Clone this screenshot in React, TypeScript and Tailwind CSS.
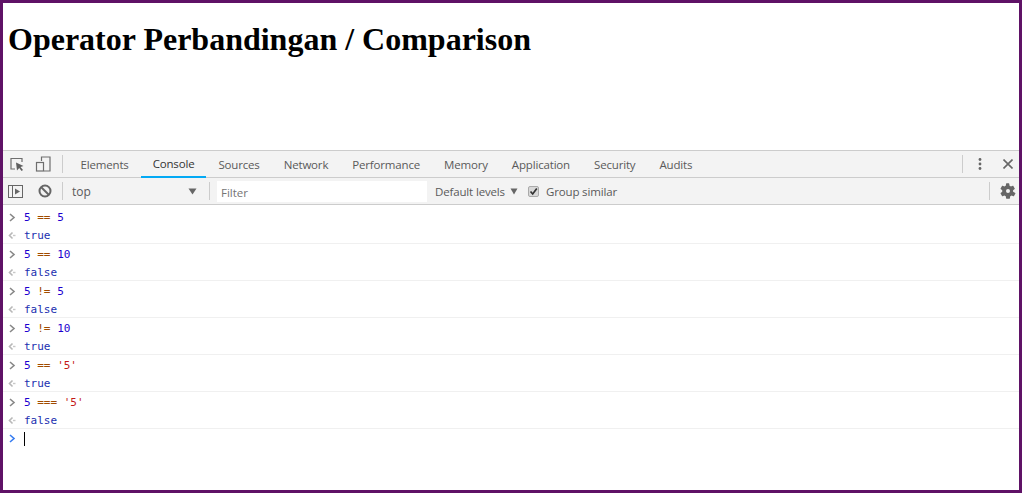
const ui = { fontFamily: '"Open Sans", "Noto Sans", sans-serif' };

const tabs = ["Elements", "Console", "Sources", "Network", "Performance", "Memory", "Application", "Security", "Audits"];

type Tok = [string, string];
const B = "text-[#1c00cf]";
const O = "text-[#a04b00]";
const R = "text-[#c41a16]";
const V = "text-[#1a2fb0]";

const rows: { input: Tok[]; output: string }[] = [
  { input: [["5", B], [" ", ""], ["==", O], [" ", ""], ["5", B]], output: "true" },
  { input: [["5", B], [" ", ""], ["==", O], [" ", ""], ["10", B]], output: "false" },
  { input: [["5", B], [" ", ""], ["!=", O], [" ", ""], ["5", B]], output: "false" },
  { input: [["5", B], [" ", ""], ["!=", O], [" ", ""], ["10", B]], output: "true" },
  { input: [["5", B], [" ", ""], ["==", O], [" ", ""], ["'5'", R]], output: "true" },
  { input: [["5", B], [" ", ""], ["===", O], [" ", ""], ["'5'", R]], output: "false" },
];

function Chevron({ color = "#888" }: { color?: string }) {
  return (
    <svg width="8" height="9" viewBox="0 0 8 9" className="shrink-0 -mt-[2px]">
      <path d="M2 1 L6 4.5 L2 8" fill="none" stroke={color} strokeWidth="1.6" />
    </svg>
  );
}

function BackArrow() {
  return (
    <svg width="8" height="9" viewBox="0 0 8 9" className="shrink-0 -mt-[1px]">
      <path d="M4.5 1.5 L1.5 4.5 L4.5 7.5" fill="none" stroke="#b8b8b8" strokeWidth="1.6" />
      <path d="M5 4.5 H7.5" stroke="#c8c8c8" strokeWidth="1.4" />
    </svg>
  );
}

function Divider({ className = "" }: { className?: string }) {
  return <div className={`w-px h-[18px] bg-[#ccc] shrink-0 ${className}`} />;
}

export default function App() {
  return (
    <div className="w-[1022px] h-[493px] border-[3px] border-[#5f1266] bg-white flex flex-col overflow-hidden">
      <div className="h-[147px] shrink-0 pl-[5px] pt-[18px]">
        <h1 className="text-[32px] leading-[37px] font-bold text-black" style={{ fontFamily: '"Liberation Serif", serif' }}>
          Operator Perbandingan / Comparison
        </h1>
      </div>

      <div className="flex-1 flex flex-col min-h-0" style={ui}>
        {/* tab bar */}
        <div className="h-[28px] shrink-0 bg-[#f3f3f3] border-y border-[#ccc] flex items-center text-[#5a5a5a]">
          <svg width="16" height="16" viewBox="0 0 16 16" className="ml-[6px] shrink-0">
            <path d="M6 13 H2 V2.5 H13 V6" fill="none" stroke="#6e6e6e" strokeWidth="1.2" />
            <path d="M7 6.5 L14.5 10 L11.5 11 L14 14 L12.6 15 L10.2 12 L8 14.5 Z" fill="#5f5f5f" />
          </svg>
          <svg width="16" height="16" viewBox="0 0 16 16" className="ml-[10px] shrink-0">
            <path d="M6.5 5 V1 H15 V15 H9" fill="none" stroke="#6e6e6e" strokeWidth="1.2" />
            <rect x="1.5" y="6.5" width="7" height="8.5" fill="none" stroke="#6e6e6e" strokeWidth="1.2" />
          </svg>
          <Divider className="ml-[11px]" />
          <div className="flex h-full ml-[5.5px]">
            {tabs.map((t) => (
              <div
                key={t}
                className={`px-[12px] h-[27px] flex items-center whitespace-nowrap text-[11.5px] tracking-[-0.17px] pt-px ${
                  t === "Console" ? "border-b-2 border-[#03a9f4] text-[#333]" : ""
                }`}
              >
                {t}
              </div>
            ))}
          </div>
          <div className="flex-1" />
          <Divider />
          <svg width="4" height="14" viewBox="0 0 4 14" className="ml-[15px] shrink-0">
            <circle cx="2" cy="2.5" r="1.4" fill="#666" />
            <circle cx="2" cy="7" r="1.4" fill="#666" />
            <circle cx="2" cy="11.5" r="1.4" fill="#666" />
          </svg>
          <svg width="10" height="10" viewBox="0 0 10 10" className="ml-[21px] mr-[6px] shrink-0">
            <path d="M0.5 0.5 L9.5 9.5 M9.5 0.5 L0.5 9.5" stroke="#666" strokeWidth="1.6" />
          </svg>
        </div>

        {/* console toolbar */}
        <div className="h-[27px] shrink-0 bg-[#f3f3f3] border-b border-[#ccc] flex items-center text-[#5a5a5a] text-[12px]">
          <svg width="15" height="13" viewBox="0 0 15 13" className="ml-[5px] shrink-0">
            <rect x="0.5" y="0.5" width="14" height="12" fill="none" stroke="#666" />
            <path d="M4.5 1 V12" stroke="#666" />
            <path d="M7 3.5 L12 6.5 L7 9.5 Z" fill="#666" />
          </svg>
          <svg width="14" height="14" viewBox="0 0 14 14" className="ml-[15px] shrink-0">
            <circle cx="7" cy="7" r="5.5" fill="none" stroke="#666" strokeWidth="2" />
            <path d="M3 3 L11 11" stroke="#666" strokeWidth="2" />
          </svg>
          <Divider className="ml-[10px]" />
          <span className="ml-[9px] w-[116px] pt-[2px]">top</span>
          <svg width="9" height="7" viewBox="0 0 9 7" className="shrink-0">
            <path d="M0.5 0.5 H8.5 L4.5 6.5 Z" fill="#666" />
          </svg>
          <Divider className="ml-[12px]" />
          <div className="ml-[7px] w-[210px] h-[21px] bg-white flex items-center pl-[4px] pt-[3px] text-[#757575] text-[11.5px]">Filter</div>
          <span className="ml-[8px] text-[11.5px] tracking-[-0.15px] whitespace-nowrap pt-px">Default levels</span>
          <svg width="8" height="7" viewBox="0 0 8 7" className="ml-[5px] shrink-0">
            <path d="M0.5 0.5 H7.5 L4 6.5 Z" fill="#666" />
          </svg>
          <span className="ml-[10px] w-[11px] h-[11px] rounded-[2px] bg-[#d8d8d8] border border-[#aaa] flex items-center justify-center shrink-0">
            <svg width="9" height="9" viewBox="0 0 9 9">
              <path d="M1.5 4.5 L3.7 7 L7.8 1.5" fill="none" stroke="#333" strokeWidth="1.7" />
            </svg>
          </span>
          <span className="ml-[7px] text-[11.5px] tracking-[-0.15px] whitespace-nowrap pt-px">Group similar</span>
          <div className="flex-1" />
          <Divider />
          <svg width="16" height="16" viewBox="0 0 24 24" className="ml-[10px] mr-[3px] shrink-0">
            <path
              fill="#666"
              d="M19.6 13.2a7.5 7.5 0 0 0 0-2.4l2.4-1.8a.6.6 0 0 0 .1-.8l-2.3-3.9a.6.6 0 0 0-.7-.2l-2.8 1.1a8 8 0 0 0-2-1.2l-.4-3a.6.6 0 0 0-.6-.5H9.7a.6.6 0 0 0-.6.5l-.4 3a8 8 0 0 0-2 1.2L3.9 4.1a.6.6 0 0 0-.7.2L.9 8.2a.6.6 0 0 0 .1.8l2.4 1.8a7.5 7.5 0 0 0 0 2.4L1 15a.6.6 0 0 0-.1.8l2.3 3.9c.1.2.4.3.7.2l2.8-1.1c.6.5 1.3.9 2 1.2l.4 3c0 .3.3.5.6.5h4.6c.3 0 .6-.2.6-.5l.4-3c.7-.3 1.4-.7 2-1.2l2.8 1.1c.3.1.6 0 .7-.2l2.3-3.9a.6.6 0 0 0-.1-.8zM12 15a3 3 0 1 1 0-6 3 3 0 0 1 0 6z"
            />
          </svg>
        </div>

        {/* console */}
        <div className="flex-1 min-h-0 pt-[2px] text-[11px] leading-[18px] whitespace-pre" style={{ fontFamily: '"DejaVu Sans Mono", monospace' }}>
          {rows.map((r, i) => (
            <div key={i} className="h-[37px] border-b border-[#f0f0f0] box-border">
              <div className="h-[19px] flex items-center pl-[5px] gap-[8px] pt-[3px]">
                <Chevron />
                <span>
                  {r.input.map(([s, c], j) => (
                    <span key={j} className={c}>{s}</span>
                  ))}
                </span>
              </div>
              <div className="h-[17px] flex items-center pl-[5px] gap-[8px] pt-[2px]">
                <BackArrow />
                <span className={V}>{r.output}</span>
              </div>
            </div>
          ))}
          <div className="h-[20px] flex items-center pl-[5px] gap-[8px]">
            <Chevron color="#367cf1" />
            <div className="w-px h-[14px] bg-black" />
          </div>
        </div>
      </div>
    </div>
  );
}
